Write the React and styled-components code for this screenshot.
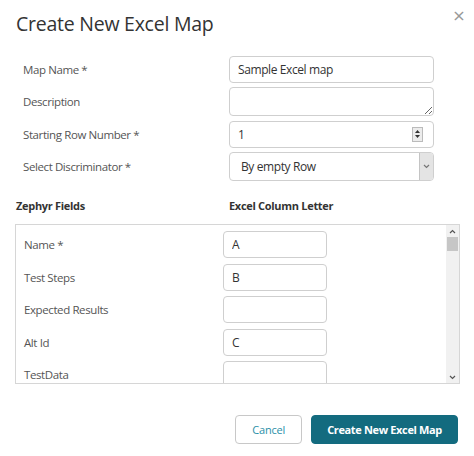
import React from 'react';
import styled, { createGlobalStyle } from 'styled-components';

const GlobalStyle = createGlobalStyle`
    html, body {
        margin: 0;
        padding: 0;
        background: #fff;
        font-family: "Open Sans", "Liberation Sans", sans-serif;
    }
`

const Dialog = styled.div`
    width: 474px;
    height: 456px;
    box-sizing: border-box;
    display: flex;
    flex-direction: column;
    background: #fff;
`
const Header = styled.div`
    display: flex;
    justify-content: space-between;
    align-items: flex-start;
    padding: 9px 8px 0 16px;
    height: 48px;
    box-sizing: border-box;
`
const Title = styled.h1`
    margin: 0;
    font-size: 19.5px;
    letter-spacing: -0.25px;
    line-height: 30px;
    font-weight: 400;
    color: #333;
`
const Close = styled.button`
    border: none;
    background: none;
    padding: 0;
    margin-top: -4px;
    width: 14px;
    height: 20px;
    color: #999;
    font-size: 16px;
    font-family: "DejaVu Sans", sans-serif;
    cursor: pointer;
`
const Form = styled.div`
    display: flex;
    flex-direction: column;
    gap: 4px;
    padding: 7px 40px 0 23px;
`
const Row = styled.div`
    display: grid;
    grid-template-columns: 206px 205px;
    align-items: center;
    height: ${p => p.h || 28}px;
`
const Label = styled.label`
    font-size: 11.5px;
    letter-spacing: -0.4px;
    color: #555;
`
const TextInput = styled.input`
    box-sizing: border-box;
    width: ${p => p.w || 205}px;
    height: 27px;
    border: 1px solid #cfcfcf;
    border-radius: 4px;
    padding: 0 8px;
    font-family: inherit;
    font-size: 12px;
    letter-spacing: -0.4px;
    color: #333;
    outline: none;
`
const TextArea = styled.textarea`
    box-sizing: border-box;
    width: 205px;
    height: 29px;
    border: 1px solid #cfcfcf;
    border-radius: 4px;
    padding: 4px 8px;
    font-family: inherit;
    font-size: 12px;
    resize: both;
    outline: none;
`
const Field = styled.div`
    box-sizing: border-box;
    width: 205px;
    height: ${p => p.h || 27}px;
    border: 1px solid #cfcfcf;
    border-radius: 4px;
    display: flex;
    align-items: stretch;
    overflow: hidden;
`
const InnerInput = styled.input`
    flex: 1;
    min-width: 0;
    border: none;
    padding: 0 0 0 8px;
    font-family: inherit;
    font-size: 12px;
    letter-spacing: -0.4px;
    color: #333;
    outline: none;
    background: transparent;
`
const Spinner = styled.div`
    display: flex;
    flex-direction: column;
    justify-content: center;
    align-items: center;
    gap: 2px;
    width: 9px;
    margin: 5px 10px 5px 0;
    border: 1px solid #bbb;
    background: #ececec;
`
const SelectBox = styled.select`
    flex: 1;
    appearance: none;
    border: none;
    padding: 0 0 0 11px;
    font-family: inherit;
    font-size: 12px;
    letter-spacing: -0.4px;
    color: #333;
    background: transparent;
    outline: none;
`
const ArrowBox = styled.div`
    width: 13px;
    background: #e4e4e4;
    border-left: 1px solid #c4c4c4;
    display: flex;
    align-items: center;
    justify-content: center;
    color: #777;
`
const TableHead = styled.div`
    display: grid;
    grid-template-columns: 213px 1fr;
    padding: 17px 16px 0 16px;
    height: 43px;
    box-sizing: border-box;
    font-size: 11px;
    letter-spacing: -0.3px;
    font-weight: 700;
    color: #333;
`
const MapBox = styled.div`
    margin: 0 14px 0 15px;
    height: 158px;
    border: 1px solid #d6d6d6;
    display: flex;
    overflow: hidden;
`
const MapList = styled.div`
    flex: 1;
    padding: 6px 0 0 8px;
    display: flex;
    flex-direction: column;
    gap: 5.5px;
`
const MapRow = styled.div`
    display: grid;
    grid-template-columns: 199px 104px;
    align-items: center;
    height: 27px;
    flex-shrink: 0;
`
const Scrollbar = styled.div`
    width: 13px;
    background: #f1f1f1;
    display: flex;
    flex-direction: column;
    align-items: center;
    color: #555;
`
const ScrollArrow = styled.div`
    height: 12px;
    display: flex;
    align-items: center;
    justify-content: center;
    margin-top: ${p => (p.down ? 'auto' : '0')};
`
const Thumb = styled.div`
    width: 11px;
    height: 14px;
    background: #c6c6c6;
`
const Footer = styled.div`
    display: flex;
    justify-content: flex-end;
    gap: 9px;
    padding: 31px 16px 0 0;
`
const Button = styled.button`
    height: 29px;
    border-radius: 4px;
    font-family: inherit;
    font-size: 11px;
    letter-spacing: ${p => (p.primary ? -0.35 : -0.2)}px;
    padding: 0 ${p => (p.primary ? 15 : 16)}px;
    border: 1px solid ${p => (p.primary ? '#136b7f' : '#c8c8c8')};
    background: ${p => (p.primary ? '#136b7f' : '#fff')};
    color: ${p => (p.primary ? '#fff' : '#2a8fa8')};
    font-weight: ${p => (p.primary ? 700 : 400)};
    cursor: pointer;
`

const Chevron = ({ up }) => (
    <svg width="7" height="5" viewBox="0 0 7 5">
        <path d={up ? 'M1 4 L3.5 1.5 L6 4' : 'M1 1 L3.5 3.5 L6 1'} fill="none" stroke="currentColor" strokeWidth="1.2" />
    </svg>
)

const Tri = ({ up }) => (
    <svg width="5" height="3" viewBox="0 0 5 3">
        <path d={up ? 'M0 3 L2.5 0 L5 3 Z' : 'M0 0 L2.5 3 L5 0 Z'} fill="#333" />
    </svg>
)

const mappings = [
    { name: 'Name *', col: 'A' },
    { name: 'Test Steps', col: 'B' },
    { name: 'Expected Results', col: '' },
    { name: 'Alt Id', col: 'C' },
    { name: 'TestData', col: '' },
]

export default function App() {
    return (
        <Dialog>
            <GlobalStyle />
            <Header>
                <Title>Create New Excel Map</Title>
                <Close>×</Close>
            </Header>
            <Form>
                <Row>
                    <Label>Map Name *</Label>
                    <TextInput defaultValue="Sample Excel map" />
                </Row>
                <Row h={29}>
                    <Label>Description</Label>
                    <TextArea />
                </Row>
                <Row>
                    <Label>Starting Row Number *</Label>
                    <Field>
                        <InnerInput defaultValue="1" />
                        <Spinner><Tri up /><Tri /></Spinner>
                    </Field>
                </Row>
                <Row h={29}>
                    <Label>Select Discriminator *</Label>
                    <Field h={29}>
                        <SelectBox defaultValue="empty">
                            <option value="empty">By empty Row</option>
                        </SelectBox>
                        <ArrowBox><Chevron /></ArrowBox>
                    </Field>
                </Row>
            </Form>
            <TableHead>
                <span>Zephyr Fields</span>
                <span>Excel Column Letter</span>
            </TableHead>
            <MapBox>
                <MapList>
                    {mappings.map((m, i) => (
                        <MapRow key={i}>
                            <Label>{m.name}</Label>
                            <TextInput w={104} defaultValue={m.col} />
                        </MapRow>
                    ))}
                </MapList>
                <Scrollbar>
                    <ScrollArrow><Chevron up /></ScrollArrow>
                    <Thumb />
                    <ScrollArrow down><Chevron /></ScrollArrow>
                </Scrollbar>
            </MapBox>
            <Footer>
                <Button>Cancel</Button>
                <Button primary>Create New Excel Map</Button>
            </Footer>
        </Dialog>
    )
}
